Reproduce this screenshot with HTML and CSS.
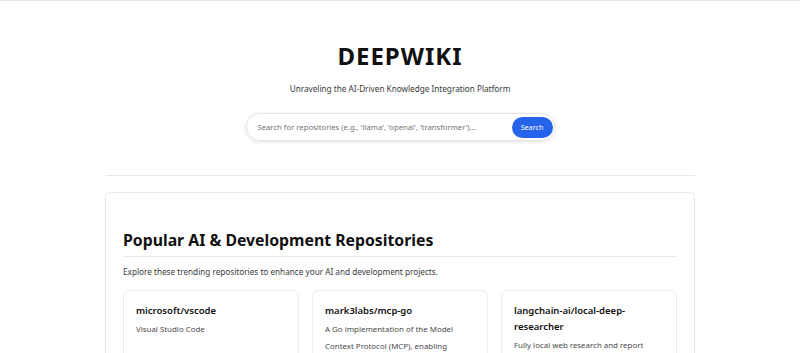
FILE: index.html
```html
<!DOCTYPE html>
<html lang="en">
<head>
	<meta charset="UTF-8">
	<title>DeepWiki</title>
	<link rel="stylesheet" href="styles.css">
</head>
<body>
	<div class="top-line"></div>
	<div class="hero">
		<h1 class="logo">DEEPWIKI</h1>
		<p class="tagline">Unraveling the AI-Driven Knowledge Integration Platform</p>
		<div class="search">
			<input type="text" placeholder="Search for repositories (e.g., 'llama', 'openai', 'transformer')...">
			<button>Search</button>
		</div>
	</div>
	<hr class="divider">
	<div class="panel">
		<h2>Popular AI &amp; Development Repositories</h2>
		<p class="intro">Explore these trending repositories to enhance your AI and development projects.</p>
		<div class="cards">
			<div class="card">
				<h3>microsoft/vscode</h3>
				<p>Visual Studio Code</p>
			</div>
			<div class="card">
				<h3>mark3labs/mcp-go</h3>
				<p>A Go implementation of the Model Context Protocol (MCP), enabling seamless integration between LLM applications and external data sources and tools.</p>
			</div>
			<div class="card">
				<h3>langchain-ai/local-deep-researcher</h3>
				<p>Fully local web research and report writing assistant</p>
			</div>
		</div>
	</div>
</body>
</html>
```

FILE: styles.css
```css
*{
	margin:0;
	padding:0;
	box-sizing:border-box;
}
body{
	font-family:"Noto Sans","Open Sans","Liberation Sans",sans-serif;
	color:#111;
	background:#fff;
}
.top-line{
	height:1px;
	background:#e6e6e6;
}
.hero{
	text-align:center;
	padding-top:40px;
}
.logo{
	font-size:24px;
	font-weight:700;
	letter-spacing:1px;
	line-height:30px;
	color:#111;
}
.tagline{
	margin-top:12px;
	font-size:8.2px;
	color:#3a3a3a;
	line-height:12px;
}
.search{
	width:309px;
	height:28px;
	margin:18px auto 0;
	display:flex;
	align-items:center;
	border:1px solid #e5e5e5;
	border-radius:14px;
	box-shadow:0 1px 4px rgba(0,0,0,0.12);
	padding:0 1px 0 11px;
}
.search input{
	flex:1;
	border:none;
	outline:none;
	font-family:inherit;
	font-size:7.7px;
	color:#333;
	background:transparent;
}
.search input::placeholder{
	color:#737373;
}
.search button{
	width:41px;
	height:21px;
	border:none;
	border-radius:11px;
	background:#2563eb;
	color:#fff;
	font-family:inherit;
	font-size:7.2px;
}
.divider{
	width:589px;
	margin:34px auto 0;
	border:none;
	border-top:1px solid #e8e8e8;
}
.panel{
	width:590px;
	margin:16px auto 0;
	border:1px solid #e8e8e8;
	border-radius:6px;
	padding:36px 17px 0;
}
.panel h2{
	font-size:15.8px;
	font-weight:700;
	line-height:22px;
	padding-bottom:5px;
	border-bottom:1px solid #e8e8e8;
}
.intro{
	margin-top:9px;
	font-size:8.2px;
	color:#3a3a3a;
	line-height:12px;
}
.cards{
	display:grid;
	grid-template-columns:repeat(3,1fr);
	gap:13px;
	margin-top:12px;
}
.card{
	border:1px solid #ebebeb;
	border-radius:6px;
	padding:12px 12px 20px;
	height:120px;
}
.card h3{
	font-size:9.5px;
	font-weight:600;
	line-height:16px;
}
.card p{
	margin-top:2px;
	font-size:7.9px;
	color:#4a4a4a;
	line-height:17px;
}
```
